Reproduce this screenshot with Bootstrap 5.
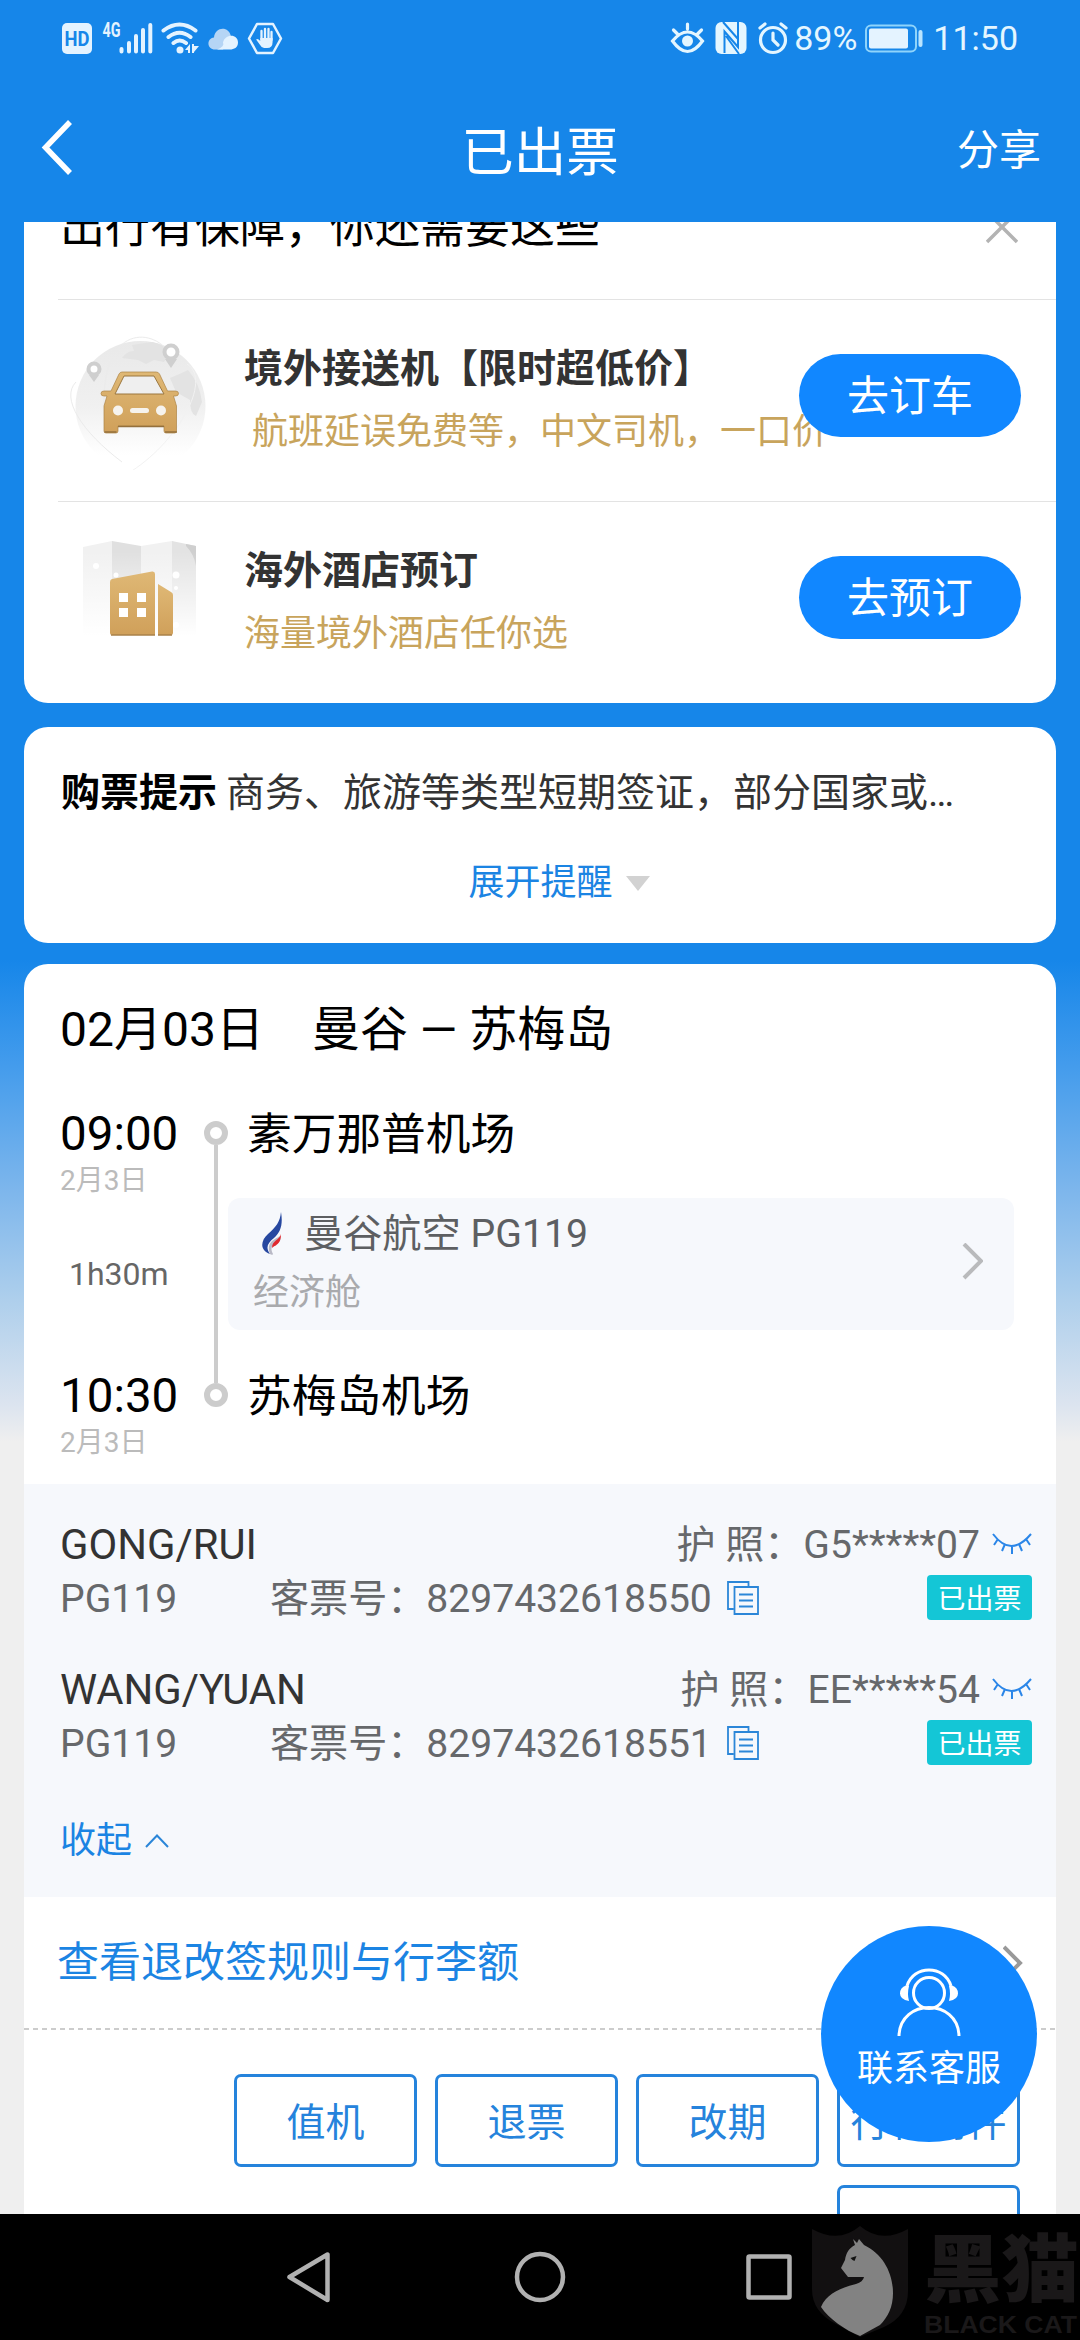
<!DOCTYPE html>
<html lang="zh-CN">
<head>
<meta charset="utf-8">
<meta name="viewport" content="width=device-width, initial-scale=1">
<title>已出票</title>
<link rel="stylesheet" href="https://cdn.jsdelivr.net/npm/bootstrap@5.3.0/dist/css/bootstrap.min.css">
<style>
  body{font-family:Roboto,"Noto Sans CJK SC",sans-serif;width:1080px;height:2340px;overflow:hidden;color:#000;
    background:linear-gradient(#1686e9 0,#1686e9 960px,#429bec 1062px,#7db6ec 1190px,#aecfec 1300px,#dce4ef 1405px,#efefef 1442px,#efefef 100%)}
  svg{display:block;flex:none}
  .statusbar{height:75px;color:#e4f6ff;font-size:34px;line-height:34px;padding:1px 62px 0 60px}
  .appbar{height:147px;color:#fff}
  .appbar .side{width:200px}
  .page-title{font-size:52.5px;line-height:60px;padding-top:8px}
  .share{font-size:42px;line-height:50px;padding:5px 39px 0 0}
  .scroller{height:1992px;padding:0 24px;overflow:hidden}
  .panel{border:0;border-radius:24px;background:#fff;color:#000}
  .offers{margin-top:-66px;height:547px;padding-left:34px;overflow:hidden}
  .offers-head{height:143px;font-size:45px;line-height:50px;padding:1px 38px 0 2px}
  .offer{height:202px;border-top:1px solid #e3e3e3;padding-right:35px}
  .offer-copy{margin-left:36px;padding-top:46px;width:0;white-space:nowrap}
  .offer-title{font-size:39px;line-height:46px;font-weight:700;color:#333}
  .offer-sub{font-size:36px;line-height:44px;margin-top:18px;color:#c8a45c}
  .btn-go{width:222px;height:83px;margin-top:54px;font-size:42px;line-height:85px;background:#1187ff;color:#fff;padding:0;position:relative;border:0}
  .tips{height:216px;margin-top:24px;padding:41px 37px 0}
  .tips-line{font-size:39px;line-height:50px;color:#333}
  .tips-line b{color:#000;margin-right:9px}
  .blue{color:#1b84e3}
  .tips-more{font-size:36px;line-height:44px;margin-top:43px;padding-left:38px;gap:13px}
  .trip{margin-top:21px;height:1400px}
  .trip-date{height:130px;font-size:48px;line-height:132px;padding-left:36px;white-space:pre}
  .route{height:390px;padding:8px 0 0 36px}
  .times{width:144px}
  .clock{font-size:47.5px;line-height:64px}
  .day{font-size:28px;line-height:30px;color:#bbb}
  .span-time{font-size:32px;line-height:40px;margin:58px 0 70px 9px;color:#666}
  .track{width:24px;height:286px;margin-top:19px}
  .stop{width:24px;height:24px;border:6.5px solid #ccc;border-radius:50%;flex:none}
  .rail{width:4px;background:#ccc}
  .airport{font-size:44.7px;line-height:66px;height:64px;padding-left:19px}
  .flight{width:786px;height:132px;margin:32px 0 34px;border-radius:12px;background:#f6f8fc;padding:0 31px 4px 25px}
  .carrier{font-size:39.2px;line-height:44px;color:#5d5f62}
  .cabin{font-size:36px;line-height:40px;margin-top:17px;color:#a9aaad}
  .people{height:413px;background:#f6f8fc;padding:34px 24px 0 36px}
  .person{height:108px;margin-bottom:37px;font-size:39.1px;color:#66686b}
  .person>div{height:54px;line-height:52px}
  .pname{font-size:41.8px;color:#333}
  .pflight{width:210px}
  .tag-ok{width:105px;height:45px;border-radius:4px;background:#14c6d6;color:#fff;font-size:28px;line-height:49px;margin-bottom:3px}
  .fold{font-size:36px;line-height:44px;margin-top:48px;gap:13px}
  .policy{height:131px;font-size:42px;line-height:50px;padding:0 33px}
  .perforation{height:2px;background:repeating-linear-gradient(90deg,#ccc 0 5px,transparent 5px 9px)}
  .actions{padding:44px 36px 0;gap:18px}
  .btn-act{width:183px;height:93px;border:3px solid #2583dc;border-radius:7px;color:#2583dc;font-size:39px;line-height:93px;padding:0;background:#fff;white-space:nowrap}
  .service{position:absolute;left:821px;top:1926px;width:216px;height:216px;background:#1187ff;color:#fff;font-size:36px;line-height:44px;padding-top:42px}
  .service svg{margin-bottom:10px}
  .sysnav{height:126px;background:#000;position:relative;padding-left:284px}
  .brand-mark{position:absolute;left:810px;top:10px;width:270px;height:116px;overflow:hidden}
</style>
</head>
<body>
<div class="statusbar d-flex align-items-center">
  <svg width="226" height="40" viewBox="60 18 226 40" fill="#e4f3ff">
    <rect x="62" y="23" width="30" height="31" rx="5"/>
    <text x="77" y="45.500" font-family="Roboto" font-size="20" font-weight="700" fill="#1686e9" text-anchor="middle" textLength="25" lengthAdjust="spacingAndGlyphs">HD</text>
    <text x="102.500" y="36.500" font-family="Roboto" font-size="20" font-weight="700" textLength="18" lengthAdjust="spacingAndGlyphs">4G</text>
    <g stroke="#e4f3ff" stroke-width="4" stroke-linecap="round"><path d="M121.500 49v2.500M129 43v8.500M136 36v15.500M143 30v21.500M150.300 25v26.500"/></g>
    <g fill="none" stroke="#e4f3ff" stroke-width="4" stroke-linecap="round"><path d="M163.500 30.500q16-12 32 0M168.500 37q11-8.500 22 0M173.500 43q6-5 12.500 0"/></g>
    <circle cx="180" cy="50" r="3.500"/><path d="M185 50l5-6v9h-2v-3zM192 44v9h2v-1l5-6h-5v-2z"/>
    <path d="M215 49.500c-8 0-9-11-1-12 1-11 15-12 17-1l-8 13z" fill="#b5d5f5"/>
    <path d="M217 49.500q8-3 6-7c2-9 15-9 15 0 0 5-4 7-8 7z"/>
    <path d="M257 24h16l8 14.500-8 14.500h-16l-8-14.500z" fill="none" stroke="#e4f3ff" stroke-width="2.500" stroke-linejoin="round"/>
    <path d="M261.500 31v9M265 29v11M268.500 29v11M271.500 32v8" fill="none" stroke="#e4f3ff" stroke-width="2.300" stroke-linecap="round"/>
    <path d="M260.300 38h12.300v4q0 6-5.500 6h-3q-2.500 0-4-3l-4-5.500q1.500-1.500 4.200 1.500z"/>
  </svg>
  <svg class="ms-auto" width="122" height="40" viewBox="670 18 122 40" fill="none" stroke="#e4f6ff" stroke-width="3.200" stroke-linecap="round">
    <path d="M673.500 41q15-18 30 0-15 21-30 0zM688.500 24v5M674.500 30l4 4M702.500 30l-4 4"/><circle cx="688.500" cy="41" r="5.500" fill="#e4f6ff" stroke="none"/>
    <rect x="716.500" y="22" width="31" height="32" rx="6" fill="#e4f6ff" stroke="none"/>
    <path d="M725.500 53V31.500L739 47V22M724 22l15 17M727 36l13 18" stroke="#1686e9" stroke-width="2" stroke-linecap="butt"/>
    <circle cx="774" cy="40" r="12.500"/><path d="M774 33v7l5 5M761 28l5-4M787 28l-5-4"/>
  </svg>
  <span style="margin-left:3px">89%</span>
  <svg style="margin-left:7px" width="62" height="30" viewBox="0 0 62 30"><rect x="2" y="2.500" width="50" height="26" rx="5" fill="none" stroke="#8fd4fb" stroke-width="2"/><rect x="5" y="5.500" width="39" height="20" rx="2" fill="#e4f3ff"/><rect x="54.500" y="7" width="4" height="17" rx="2" fill="#b9e4ff"/></svg>
  <span style="margin-left:7px">11:50</span>
</div>
<header class="appbar d-flex align-items-center justify-content-between">
  <div class="side"><svg style="margin:0 0 3px 40px" width="36" height="60" viewBox="0 0 36 60"><path d="M30 5L5.500 30.500 30 56" fill="none" stroke="#fff" stroke-width="5.500"/></svg></div>
  <div class="page-title">已出票</div>
  <div class="side share text-end">分享</div>
</header>
<main class="scroller">
  <section class="panel offers">
    <div class="offers-head d-flex align-items-center justify-content-between"><span>出行有保障，你还需要这些</span>
      <svg width="32" height="32" viewBox="0 0 32 32"><path d="M1 0L31 30M31 0L1 30" stroke="#b3b3b3" stroke-width="3.500"/></svg></div>
    <div class="offer d-flex">
      <svg class="ms-2" style="margin-top:20px" width="142" height="150" viewBox="0 0 142 150">
        <defs>
          <linearGradient id="globe" x2="0" y2="1"><stop stop-color="#e9e9e9"/><stop offset=".5" stop-color="#f0f0f0"/><stop offset=".88" stop-color="#fff"/></linearGradient>
          <linearGradient id="gold" x2="0" y2="1"><stop stop-color="#dfb875"/><stop offset="1" stop-color="#d0a05a"/></linearGradient>
        </defs>
        <circle cx="74.500" cy="86" r="65" fill="url(#globe)"/>
        <path d="M56 38q6-8 12-7l-2-6 20-3q12 2 18 10l-6 10-10-2-8 4-8-4zM104 58q10-4 18-8 12 14 14 32l-6 14q-6-2-6-16l-14-8z" fill="#e3e3e3"/>
        <g fill="none" stroke="#ebebeb" stroke-width="1"><path d="M38 86c-2-90 60-76 68-46M10 62c-16 16 6 50 46 80"/><path d="M61 154c50-30 86-94 60-110" stroke="#f2f2f2"/></g>
        <g fill="#fff" stroke="#cfcfcf" stroke-width="4"><circle cx="28" cy="49" r="5.500"/><circle cx="105" cy="32" r="6.500"/></g>
        <path d="M23 55h10l-5 7zM99 39h12l-6 9z" fill="#cfcfcf"/>
        <path d="M56 52h34q2.500 0 3.500 2l8 17h8q3 0 3 2.500t-3 2.500h-2l3 10v25q0 2-2 2H100q-2 0-2-2v-5H52v5q0 2-2 2H40q-2 0-2-2V86l3-10h-3q-3 0-3-2.500t3-2.500h7l8-17q1-2 3-2z" fill="url(#gold)" stroke="#ae8445" stroke-width=".7"/>
        <path d="M58 56h30l10 18H49z" fill="#efefef" stroke="#9b773f" stroke-width="1"/>
        <path d="M38.500 112h12M99 112h12M52 106.500h46" stroke="#94703d" stroke-width="1.500"/>
        <circle cx="52" cy="90.500" r="5" fill="#f6f3ee"/><circle cx="95" cy="90.500" r="5" fill="#f6f3ee"/><rect x="64" y="88" width="19" height="5" rx="2.500" fill="#f6f3ee"/>
      </svg>
      <div class="offer-copy flex-grow-1"><div class="offer-title">境外接送机【限时超低价】</div><div class="offer-sub ps-2">航班延误免费等，中文司机，一口价</div></div>
      <a class="btn rounded-pill btn-go">去订车</a>
    </div>
    <div class="offer d-flex">
      <svg class="ms-2" style="margin-top:20px" width="142" height="150" viewBox="0 0 142 150">
        <defs><linearGradient id="fade" x2="0" y2="1"><stop offset=".1" stop-color="#fff" stop-opacity="0"/><stop offset=".9" stop-color="#fff"/></linearGradient></defs>
        <path d="M17 25l29-6v99l-29 4zM75 24l31-5v97l-31 6z" fill="#f1f1f1"/><path d="M46 19l29 5v98l-29-4z" fill="#e0e0e0"/><path d="M106 19l24 5v96l-24-4z" fill="#e3e3e3"/>
        <path d="M120 22l10 2v20q-2-12-10-20z" fill="#cfcfcf"/><path d="M17 19h114v105H17z" fill="url(#fade)"/>
        <g fill="#fff"><circle cx="30" cy="44" r="3"/><circle cx="50" cy="53" r="2.500"/><circle cx="110" cy="53" r="3.500"/><circle cx="110" cy="66" r="2"/><circle cx="110" cy="103" r="3"/></g>
        <path d="M46 57l40-7.500q3-.500 3 2.500v61H46q-2 0-2-2V60q0-2.500 2-3z" fill="url(#gold)"/><path d="M92 62l13 8q2 1 2 3v38q0 2-2 2H92z" fill="url(#gold)"/>
        <path d="M45 113h44M92 113h14" stroke="#a98149" stroke-width="1.500"/>
        <path d="M53 71h9v9h-9zM71 71h9v9h-9zM53 86h9v9h-9zM71 86h9v9h-9z" fill="#fff"/>
      </svg>
      <div class="offer-copy flex-grow-1"><div class="offer-title">海外酒店预订</div><div class="offer-sub">海量境外酒店任你选</div></div>
      <a class="btn rounded-pill btn-go">去预订</a>
    </div>
  </section>

  <section class="panel tips">
    <div class="tips-line text-nowrap"><b>购票提示</b>商务、旅游等类型短期签证，部分国家或…</div>
    <div class="tips-more blue d-flex justify-content-center align-items-center"><span>展开提醒</span><svg width="24" height="16" viewBox="0 0 24 16"><path d="M0 1h24L12 16z" fill="#d2d2d2"/></svg></div>
  </section>

  <section class="panel trip">
    <div class="trip-date">02月03日　曼谷 — 苏梅岛</div>
    <div class="route d-flex">
      <div class="times">
        <div class="clock">09:00</div><div class="day">2月3日</div>
        <div class="span-time">1h30m</div>
        <div class="clock">10:30</div><div class="day">2月3日</div>
      </div>
      <div class="track d-flex flex-column align-items-center"><i class="stop"></i><i class="rail flex-grow-1"></i><i class="stop"></i></div>
      <div>
        <div class="airport">素万那普机场</div>
        <div class="flight d-flex align-items-center justify-content-between">
          <div>
            <div class="carrier d-flex align-items-center">
              <svg style="margin:0 21px 0 8px" width="22" height="44" viewBox="0 0 22 44"><path d="M20 0c2 12 0 20-7 26-6 5-9 9-4 16C-2 38 0 28 7 22 15 15 19 10 20 0z" fill="#2748a0"/><path d="M19 24c-6 4-14 6-10 18 1 1 3 1 3 0-3-6-1-8 2-10 6-2 6-5 5-8z" fill="#b9b9c6"/><path d="M20 22c-1 6-9 6-9 14 3-3 9-3 9-14z" fill="#e0282e"/></svg>
              <span>曼谷航空 PG119</span></div>
            <div class="cabin">经济舱</div>
          </div>
          <svg width="21" height="38" viewBox="0 0 21 38"><path d="M2 1l17 17L2 35" fill="none" stroke="#b9babc" stroke-width="4"/></svg>
        </div>
        <div class="airport">苏梅岛机场</div>
      </div>
    </div>

    <div class="people">
      <div class="person">
        <div class="d-flex align-items-center"><span class="pname">GONG/RUI</span><span class="ms-auto">护 照：G5*****07</span>
          <svg style="margin:0 0 3px 12px" width="40" height="22" viewBox="0 0 40 22"><path d="M1 1q18 24 38 0M6 6l-4 6M13 11l-3 7M20 13v8M27 11l3 7M34 6l4 6" fill="none" stroke="#2b86e8" stroke-width="2"/></svg></div>
        <div class="d-flex align-items-center"><span class="pflight">PG119</span><span>客票号：8297432618550</span>
          <svg style="margin:0 0 3px 15px" width="32" height="34" viewBox="0 0 32 34"><path d="M6.500 28H1V1h20.500v4.500M7.500 6h23.500v27H7.500zM12 13.500h14M12 19.500h14M12 25.500h14" fill="none" stroke="#2b86d8" stroke-width="1.800"/></svg>
          <span class="tag-ok ms-auto text-center">已出票</span></div>
      </div>
      <div class="person">
        <div class="d-flex align-items-center"><span class="pname">WANG/YUAN</span><span class="ms-auto">护 照：EE*****54</span>
          <svg style="margin:0 0 3px 12px" width="40" height="22" viewBox="0 0 40 22"><path d="M1 1q18 24 38 0M6 6l-4 6M13 11l-3 7M20 13v8M27 11l3 7M34 6l4 6" fill="none" stroke="#2b86e8" stroke-width="2"/></svg></div>
        <div class="d-flex align-items-center"><span class="pflight">PG119</span><span>客票号：8297432618551</span>
          <svg style="margin:0 0 3px 15px" width="32" height="34" viewBox="0 0 32 34"><path d="M6.500 28H1V1h20.500v4.500M7.500 6h23.500v27H7.500zM12 13.500h14M12 19.500h14M12 25.500h14" fill="none" stroke="#2b86d8" stroke-width="1.800"/></svg>
          <span class="tag-ok ms-auto text-center">已出票</span></div>
      </div>
      <div class="fold blue d-flex align-items-center"><span>收起</span><svg width="24" height="16" viewBox="0 0 24 16"><path d="M1 14L12 2.500 23 14" fill="none" stroke="#2b86d8" stroke-width="2"/></svg></div>
    </div>
    <div class="policy blue d-flex align-items-center justify-content-between"><span>查看退改签规则与行李额</span>
      <svg width="20" height="36" viewBox="0 0 20 36"><path d="M1 2l16 16L1 34" fill="none" stroke="#999" stroke-width="4"/></svg></div>
    <div class="perforation"></div>
    <div class="actions d-flex flex-wrap justify-content-end">
      <a class="btn btn-act">值机</a><a class="btn btn-act">退票</a><a class="btn btn-act">改期</a><a class="btn btn-act">行程附件</a><a class="btn btn-act"></a>
    </div>
  </section>
</main>
<div class="service rounded-circle d-flex flex-column align-items-center">
  <svg width="64" height="69" viewBox="0 0 64 69" fill="none" stroke="#fff" stroke-width="3"><circle cx="32" cy="25" r="15.500"/><path d="M10 18C16-3.500 48-3.500 54 18M2 68C3 30 61 30 62 68"/><path d="M9 17.500q-6 2-6 8t9 7.500q-2-7 0-15zM55 17.500q6 2 6 8t-9 7.500q2-7 0-15z" fill="#fff" stroke="none"/></svg>
  <span>联系客服</span>
</div>
<footer class="sysnav">
  <svg width="510" height="126" viewBox="284 0 510 126" fill="none" stroke="#b1b1b1" stroke-width="4.500" stroke-linejoin="round"><path d="M327.500 40.500v45.500L289.500 63z"/><circle cx="540" cy="63" r="23"/><rect x="748.500" y="42.500" width="41" height="41" rx="1"/></svg>
  <svg class="brand-mark" viewBox="810 2224 270 116">
    <path d="M812 2229q27 15 48-3 21 18 48 3v62q0 25-24 36l-24 10-24-13q-24-12-24-35z" fill="#121011"/>
    <path d="M853 2239l4 4 2-4 5 6c19 9 29 28 29 48 0 14-5 24-13 32l-20 11c-15-6-31-17-39-29 6-14 20-19 35-23q7-2 8-7h-16l-7-9 4-8c1-7 4-12 10-15z" fill="#828282"/>
    <path d="M850.500 2258l6-2-2 5-2-1z" fill="#111"/>
    <text x="924" y="2296" font-family="Noto Sans CJK SC" font-weight="900" font-size="74" fill="#1a1819" textLength="155" lengthAdjust="spacingAndGlyphs">黑猫</text>
    <text x="924" y="2333" font-family="Liberation Sans" font-weight="700" font-size="23" fill="#1a1819" textLength="153" lengthAdjust="spacingAndGlyphs">BLACK CAT</text>
  </svg>
</footer>
<script src="https://cdn.jsdelivr.net/npm/bootstrap@5.3.0/dist/js/bootstrap.bundle.min.js"></script>
</body>
</html>
